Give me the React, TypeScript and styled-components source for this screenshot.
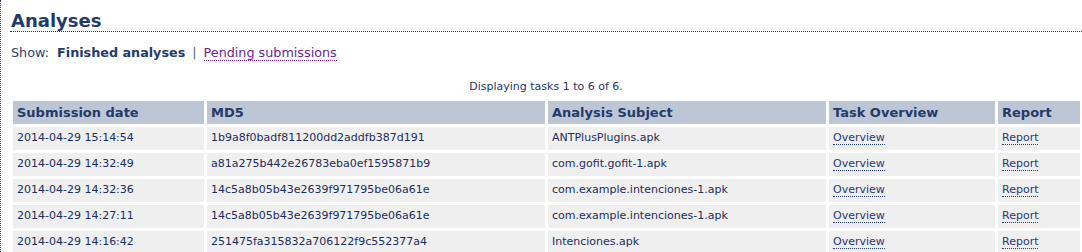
import React from 'react'
import styled, { createGlobalStyle } from 'styled-components'

const GlobalStyle = createGlobalStyle`
  html, body {
    margin: 0;
    padding: 0;
    background: #ffffff;
  }
  body {
    font-family: 'DejaVu Sans', Verdana, sans-serif;
    font-size: 11px;
    color: #1c2d5c;
    overflow: hidden;
  }
`

const Page = styled.div`
  height: 252px;
  box-sizing: border-box;
  border-left: 1px dotted #1f3566;
  padding: 10px 0 0 9px;
  overflow: hidden;
`

const Title = styled.h2`
  margin: 0;
  font-size: 18px;
  line-height: 21px;
  font-weight: bold;
  color: #1f3a6b;
  border-bottom: 1px dotted #1f3566;
  padding-left: 1px;
`

const ShowBar = styled.div`
  margin: 13px 0 0 1px;
  font-size: 12.75px;
  line-height: 16px;
  color: #2a3d6a;
`

const Current = styled.strong`
  margin-left: 4px;
  color: #1f3a6b;
`

const Sep = styled.span`
  margin: 0 7px;
  color: #555e78;
`

const Link = styled.a<{ $visited?: boolean }>`
  color: ${(p) => (p.$visited ? '#6a1f95' : '#24397a')};
  text-decoration: none;
  border-bottom: 1px dotted ${(p) => (p.$visited ? '#6a1f95' : '#24397a')};
  cursor: pointer;
`

const Paging = styled.div`
  margin-top: 19px;
  text-align: center;
  line-height: 14px;
  color: #2a3566;
`

const Table = styled.table`
  width: 1073px;
  margin-top: 4px;
  border-spacing: 3px;
  border-collapse: separate;
`

const Th = styled.th<{ $w: number }>`
  width: ${(p) => p.$w}px;
  background: #bdc6d5;
  color: #233a6a;
  font-size: 13px;
  line-height: 16px;
  font-weight: bold;
  text-align: left;
  padding: 4px 4px 3px;
`

const Td = styled.td`
  background: #efefef;
  color: #1c2d5c;
  line-height: 14px;
  padding: 4px 4px 5px;
  white-space: nowrap;
`

const tasks = [
  ['2014-04-29 15:14:54', '1b9a8f0badf811200dd2addfb387d191', 'ANTPlusPlugins.apk'],
  ['2014-04-29 14:32:49', 'a81a275b442e26783eba0ef1595871b9', 'com.gofit.gofit-1.apk'],
  ['2014-04-29 14:32:36', '14c5a8b05b43e2639f971795be06a61e', 'com.example.intenciones-1.apk'],
  ['2014-04-29 14:27:11', '14c5a8b05b43e2639f971795be06a61e', 'com.example.intenciones-1.apk'],
  ['2014-04-29 14:16:42', '251475fa315832a706122f9c552377a4', 'Intenciones.apk'],
]

const App = () => {
  return (
    <Page>
      <GlobalStyle />
      <Title>Analyses</Title>
      <ShowBar>
        Show: <Current>Finished analyses</Current>
        <Sep>|</Sep>
        <Link $visited>Pending submissions</Link>
      </ShowBar>
      <Paging>Displaying tasks 1 to 6 of 6.</Paging>
      <Table>
        <thead>
          <tr>
            <Th $w={183}>Submission date</Th>
            <Th $w={330}>MD5</Th>
            <Th $w={270}>Analysis Subject</Th>
            <Th $w={158}>Task Overview</Th>
            <Th $w={74}>Report</Th>
          </tr>
        </thead>
        <tbody>
          {tasks.map((t, i) => (
            <tr key={i}>
              <Td>{t[0]}</Td>
              <Td>{t[1]}</Td>
              <Td>{t[2]}</Td>
              <Td>
                <Link>Overview</Link>
              </Td>
              <Td>
                <Link>Report</Link>
              </Td>
            </tr>
          ))}
        </tbody>
      </Table>
    </Page>
  )
}

export default App
